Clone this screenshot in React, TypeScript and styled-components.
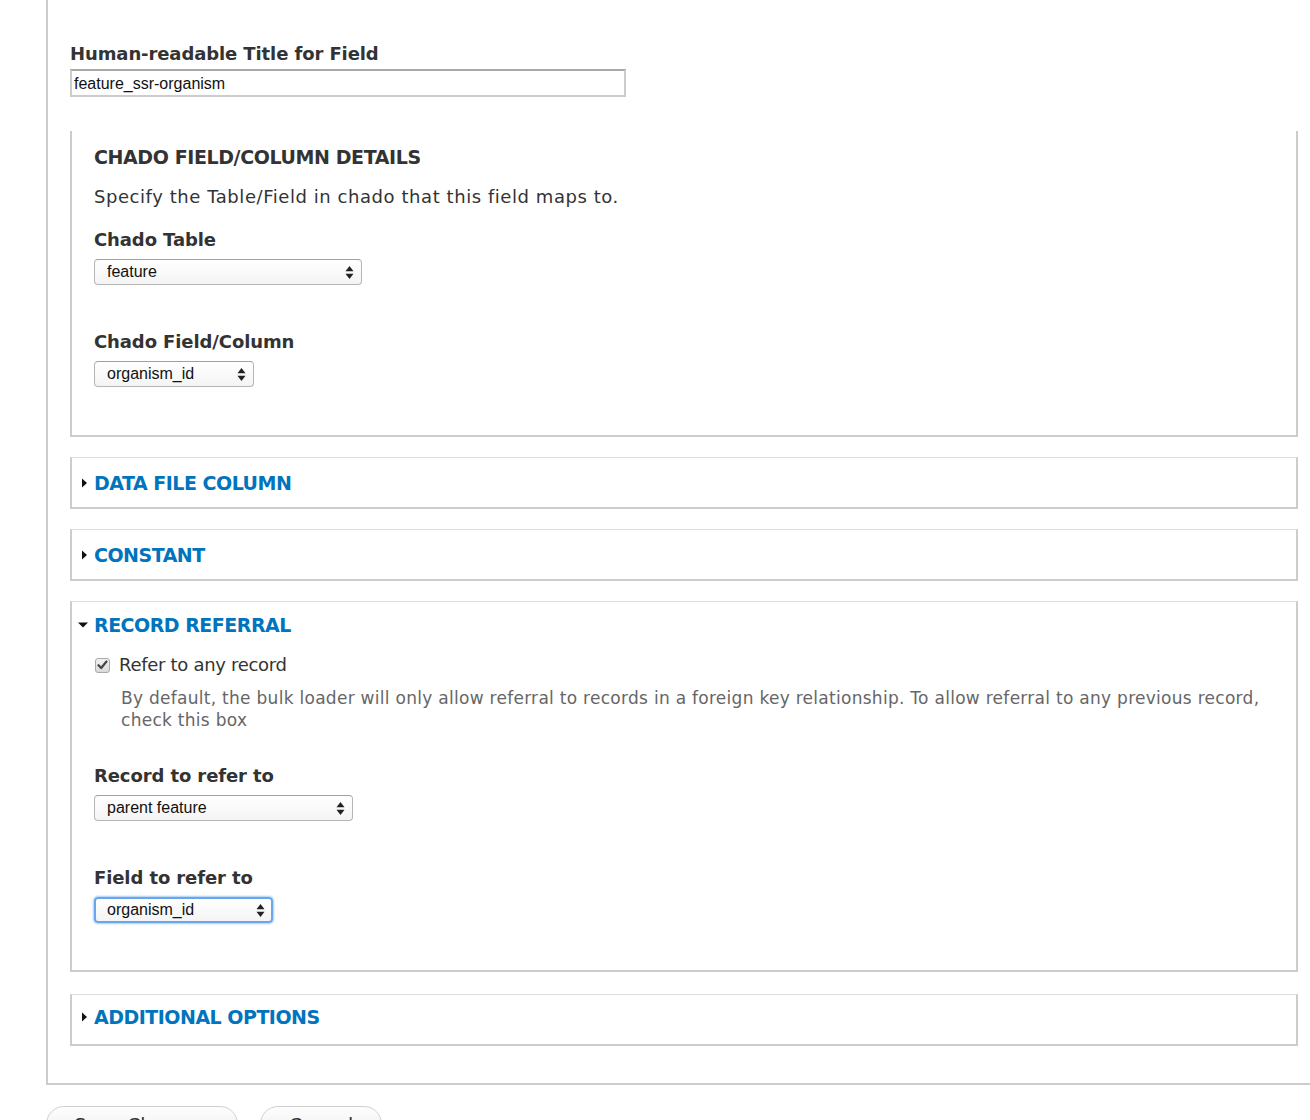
import React from "react";
import styled, { createGlobalStyle, css } from "styled-components";

const GlobalStyle = createGlobalStyle`
  html, body {
    margin: 0;
    padding: 0;
    background: #fff;
    overflow: hidden;
  }
  body {
    font-family: "DejaVu Sans", "Noto Sans", sans-serif;
    color: #333;
  }
`;

const Page = styled.div`
  padding-left: 46px;
  width: 1400px;
`;

const OuterFieldset = styled.div`
  border-left: 2px solid #ccc;
  border-bottom: 2px solid #ccc;
  padding: 43px 0 37px 22px;
`;

const Column = styled.div`
  width: 1228px;
`;

const Label = styled.div<{ $gap?: number }>`
  font-size: 18px;
  font-weight: bold;
  line-height: 22px;
  color: #333;
  margin-bottom: ${(p) => p.$gap ?? 8}px;
  letter-spacing: -0.1px;
`;

const TextInput = styled.div`
  box-sizing: border-box;
  width: 556px;
  height: 28px;
  border: 2px solid #ccc;
  border-top-color: #a9a9a9;
  padding: 0 2px;
  font-family: "Liberation Sans", Arial, sans-serif;
  font-size: 16px;
  line-height: 25px;
  color: #111;
`;

const TitleItem = styled.div`
  margin-bottom: 34px;
`;

const Fieldset = styled.div<{ $noTop?: boolean; $pt: number; $pb: number; $mb?: number }>`
  box-sizing: border-box;
  width: 1228px;
  border: 2px solid #ccc;
  border-top: ${(p) => (p.$noTop ? "none" : "1px solid #ddd")};
  padding: ${(p) => p.$pt}px 20px ${(p) => p.$pb}px 22px;
  margin-bottom: ${(p) => p.$mb ?? 20}px;
  &:last-child {
    margin-bottom: 0;
  }
`;

const SectionTitle = styled.div`
  font-size: 19px;
  font-weight: bold;
  line-height: 22px;
  text-transform: uppercase;
  color: #333;
  letter-spacing: -0.4px;
  margin-bottom: 18px;
`;

const Paragraph = styled.div`
  font-size: 18px;
  line-height: 22px;
  color: #333;
  margin-bottom: 21px;
  letter-spacing: 0.56px;
`;

const LegendRow = styled.div<{ $open?: boolean }>`
  display: flex;
  align-items: center;
  margin-left: -16px;
  margin-bottom: ${(p) => (p.$open ? 18 : 0)}px;
`;

const LegendLink = styled.span`
  font-size: 19px;
  font-weight: bold;
  line-height: 22px;
  text-transform: uppercase;
  color: #0074bd;
  letter-spacing: -0.5px;
`;

const FormItem = styled.div<{ $last?: boolean }>`
  margin-bottom: ${(p) => (p.$last ? 0 : 46)}px;
`;

const SelectBox = styled.div<{ $w: number; $focus?: boolean }>`
  box-sizing: border-box;
  width: ${(p) => p.$w}px;
  height: 26px;
  display: flex;
  align-items: center;
  justify-content: space-between;
  padding: 0 7px 0 12px;
  border: 1px solid #b5b5b5;
  border-top-color: #a0a0a0;
  border-radius: 4px;
  background: linear-gradient(#ffffff, #f4f4f4);
  font-family: "Liberation Sans", Arial, sans-serif;
  font-size: 16px;
  color: #111;
  ${(p) =>
    p.$focus &&
    css`
      border: 2px solid #6aa6ee;
      box-shadow: 0 0 2px 1px #a9cdf5;
      padding: 0 6px 0 11px;
    `}
`;

const CheckRow = styled.div`
  display: flex;
  align-items: center;
  gap: 9px;
  margin-left: 1px;
  margin-bottom: 11px;
`;

const CheckBox = styled.span`
  box-sizing: border-box;
  width: 15px;
  height: 15px;
  border: 1px solid #aaa;
  border-radius: 3px;
  background: linear-gradient(#f2f2f2, #d9d9d9);
  display: flex;
  align-items: center;
  justify-content: center;
`;

const CheckLabel = styled.span`
  font-size: 18px;
  line-height: 22px;
  color: #333;
  letter-spacing: -0.3px;
`;

const Description = styled.div`
  font-size: 17px;
  line-height: 22px;
  color: #666;
  margin-left: 27px;
  margin-bottom: 34px;
  letter-spacing: 0.28px;
`;

const ButtonRow = styled.div`
  display: flex;
  gap: 22px;
  padding-top: 21px;
`;

const Button = styled.div<{ $w: number }>`
  box-sizing: border-box;
  width: ${(p) => p.$w}px;
  height: 36px;
  border: 1px solid #d0d0d0;
  border-radius: 18px;
  background: linear-gradient(#fdfdfd, #ececec);
  font-size: 19px;
  line-height: 30px;
  padding-top: 3px;
  text-align: center;
  color: #333;
`;

const Arrows = () => (
  <svg width="9" height="15" viewBox="0 0 9 15">
    <polygon points="4.5,1 8.5,6.3 0.5,6.3" fill="#222" />
    <polygon points="0.5,8.7 8.5,8.7 4.5,14" fill="#222" />
  </svg>
);

const Select = ({ w, value, focus }: { w: number; value: string; focus?: boolean }) => (
  <SelectBox $w={w} $focus={focus}>
    <span>{value}</span>
    <Arrows />
  </SelectBox>
);

const Toggle = ({ open }: { open?: boolean }) => (
  <svg width="16" height="12" viewBox="0 0 16 12">
    {open ? (
      <polygon points="0,3.5 10,3.5 5,8.5" fill="#111" />
    ) : (
      <polygon points="4,1.5 9,6 4,10.5" fill="#111" />
    )}
  </svg>
);

const Legend = ({ title, open }: { title: string; open?: boolean }) => (
  <LegendRow $open={open}>
    <Toggle open={open} />
    <LegendLink>{title}</LegendLink>
  </LegendRow>
);

export default function App() {
  return (
    <>
      <GlobalStyle />
      <Page>
        <OuterFieldset>
          <Column>
            <TitleItem>
              <Label $gap={4}>Human-readable Title for Field</Label>
              <TextInput>feature_ssr-organism</TextInput>
            </TitleItem>

            <Fieldset $noTop $pt={15} $pb={48}>
              <SectionTitle>Chado Field/Column Details</SectionTitle>
              <Paragraph>Specify the Table/Field in chado that this field maps to.</Paragraph>
              <FormItem>
                <Label>Chado Table</Label>
                <Select w={268} value="feature" />
              </FormItem>
              <FormItem $last>
                <Label>Chado Field/Column</Label>
                <Select w={160} value="organism_id" />
              </FormItem>
            </Fieldset>

            <Fieldset $pt={14} $pb={13}>
              <Legend title="Data File Column" />
            </Fieldset>

            <Fieldset $pt={14} $pb={13}>
              <Legend title="Constant" />
            </Fieldset>

            <Fieldset $pt={12} $pb={47} $mb={22}>
              <Legend title="Record Referral" open />
              <CheckRow>
                <CheckBox>
                  <svg width="11" height="10" viewBox="0 0 11 10">
                    <path d="M1.5 5.2 L4.2 8 L9.5 1.5" stroke="#444" strokeWidth="2.2" fill="none" strokeLinecap="round" strokeLinejoin="round" />
                  </svg>
                </CheckBox>
                <CheckLabel>Refer to any record</CheckLabel>
              </CheckRow>
              <Description>
                By default, the bulk loader will only allow referral to records in a foreign key relationship. To allow referral to any previous record, check this box
              </Description>
              <FormItem>
                <Label>Record to refer to</Label>
                <Select w={259} value="parent feature" />
              </FormItem>
              <FormItem $last>
                <Label>Field to refer to</Label>
                <Select w={179} value="organism_id" focus />
              </FormItem>
            </Fieldset>

            <Fieldset $pt={11} $pb={16}>
              <Legend title="Additional Options" />
            </Fieldset>
          </Column>
        </OuterFieldset>
        <ButtonRow>
          <Button $w={192}>Save Changes</Button>
          <Button $w={122}>Cancel</Button>
        </ButtonRow>
      </Page>
    </>
  );
}
